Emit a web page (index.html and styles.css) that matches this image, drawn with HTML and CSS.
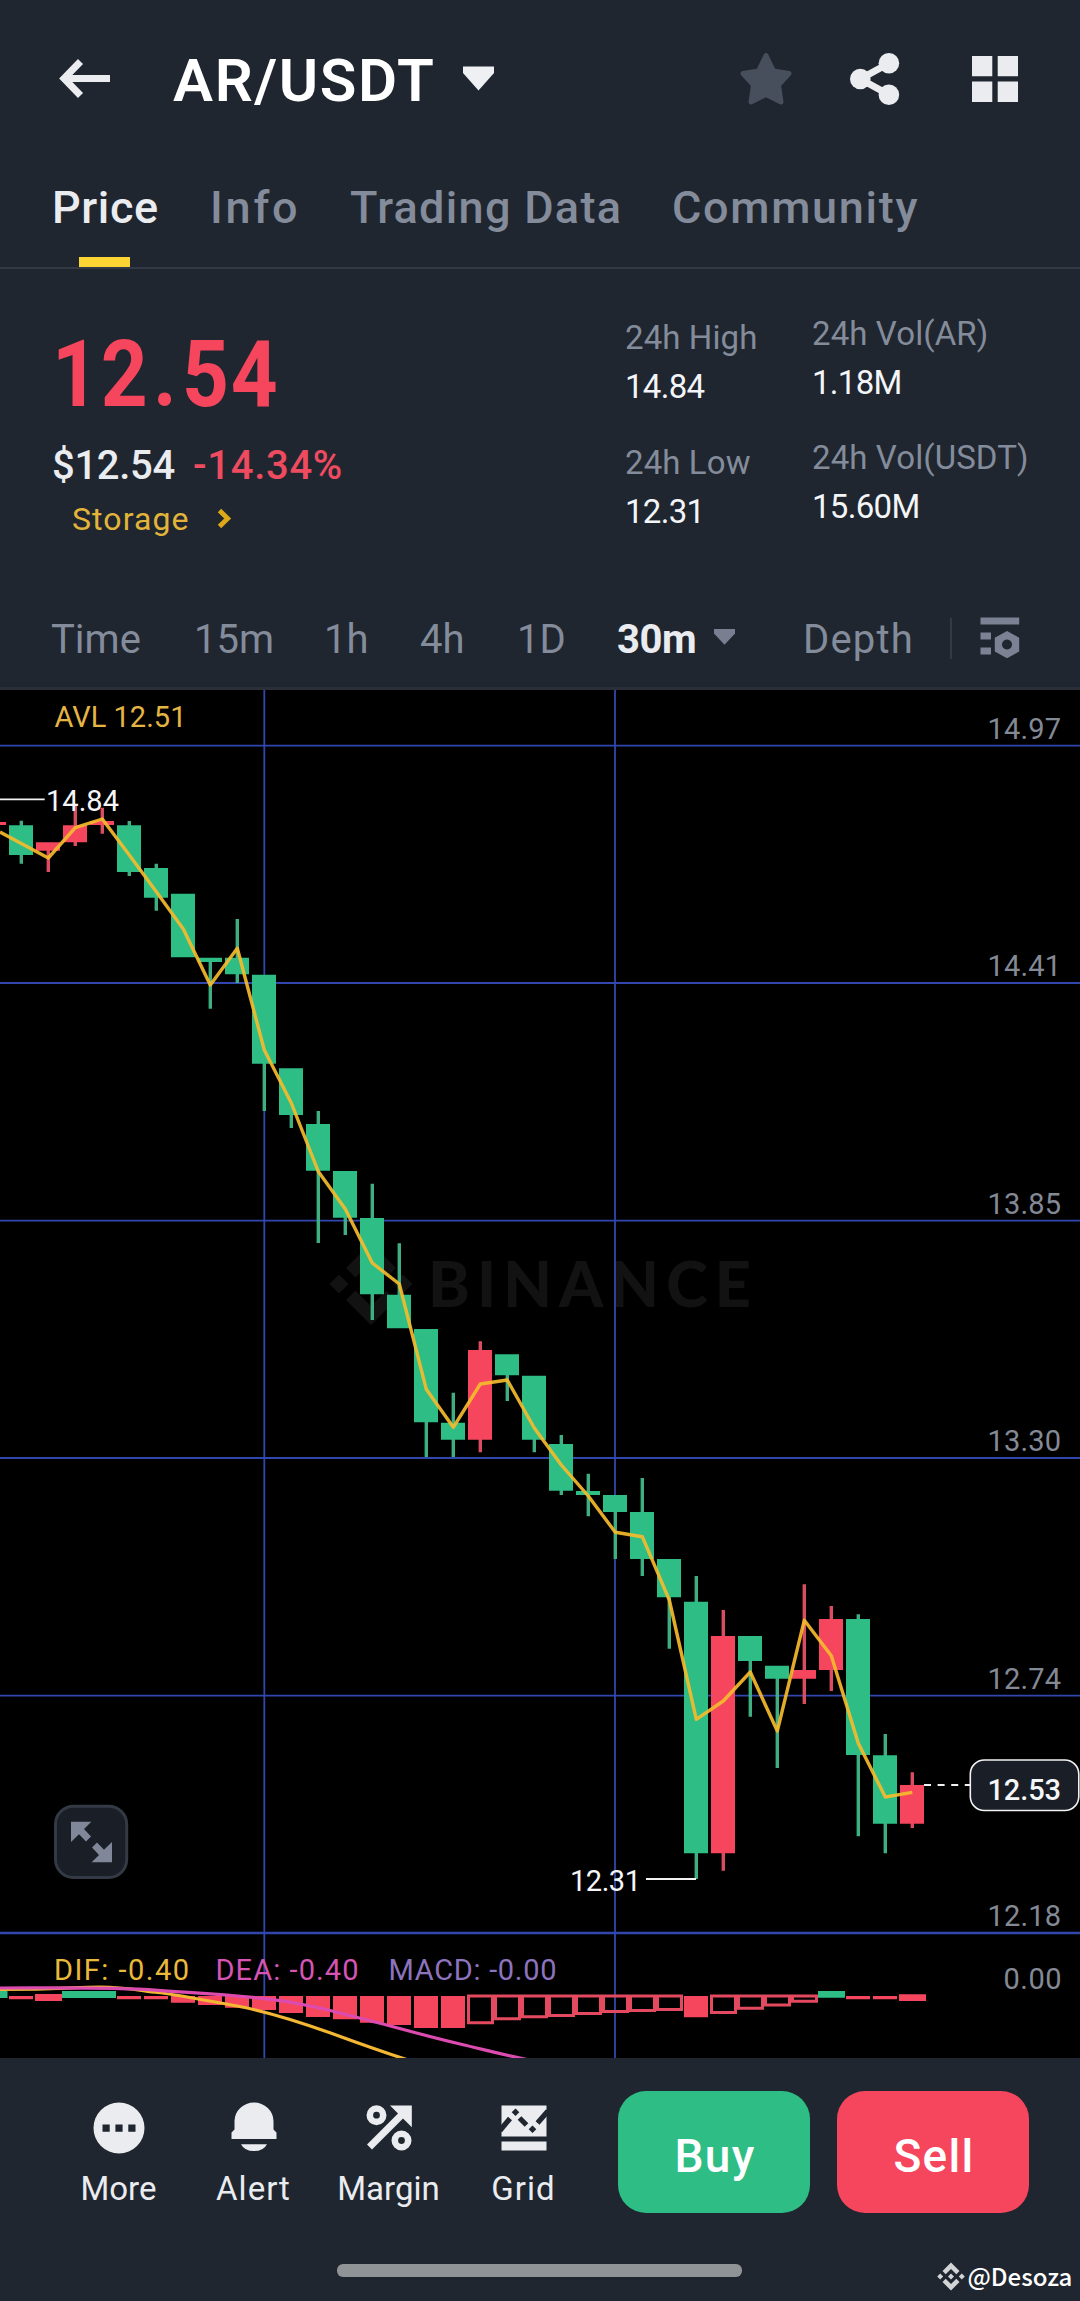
FILE: index.html
```html
<!DOCTYPE html>
<html lang="en">
<head>
<meta charset="utf-8">
<title>AR/USDT</title>
<link rel="stylesheet" href="styles.css">
</head>
<body>
<header class="header">
  <svg class="back" width="52" height="40" viewBox="59 59 52 40"><path d="M110 78.5H64M80.500 61.500L64 78.500L80.500 95.500" fill="none" stroke="#eaecef" stroke-width="7"/></svg>
  <h1 class="pair">AR/USDT</h1>
  <svg class="pair-caret" width="32" height="26" viewBox="463 66 32 26"><path d="M463 66.500H494V73L478.500 90.500L463 73Z" fill="#eef0f4"/></svg>
  <div class="actions">
    <svg width="52" height="54" viewBox="740 52 52 54"><path d="M766 55.500L773.500 71L789 73.500L778.500 85L781 102L766 94.500L751 102L753.500 85L743 73.500L758.500 71Z" fill="#474f5d" stroke="#474f5d" stroke-width="5" stroke-linejoin="round"/></svg>
    <svg width="52" height="54" viewBox="849 52 52 54"><path d="M889 63.300L860.300 79L889 94.700" fill="none" stroke="#eaecef" stroke-width="7"/><g fill="#eaecef"><circle cx="860.300" cy="79" r="10.300"/><circle cx="888.900" cy="63.300" r="10.300"/><circle cx="888.900" cy="94.700" r="10.300"/></g></svg>
    <svg width="48" height="54" viewBox="971 52 48 54"><path d="M972 56h20.300v20.300H972zM997.700 56H1018v20.300h-20.300zM972 81.500h20.300V102H972zM997.700 81.500H1018V102h-20.300z" fill="#eaecef"/></svg>
  </div>
</header>

<nav class="tabs">
  <a class="tab active">Price</a>
  <a class="tab info">Info</a>
  <a class="tab data">Trading Data</a>
  <a class="tab community">Community</a>
</nav>

<section class="summary">
  <div class="quote">
    <div class="last">12<span class="point">.</span>54</div>
    <div class="change"><span class="fiat">$12.54</span><span class="percent">-14.34%</span></div>
    <div class="category">Storage<svg width="15" height="20" viewBox="217 507 15 20"><path d="M219.500 509.500L227.700 517.500L219.500 525.500" fill="none" stroke="#dda918" stroke-width="4.800"/></svg></div>
  </div>
  <dl class="stats range">
    <div><dt>24h High</dt><dd>14.84</dd></div>
    <div><dt>24h Low</dt><dd>12.31</dd></div>
  </dl>
  <dl class="stats volume">
    <div><dt>24h Vol(AR)</dt><dd>1.18M</dd></div>
    <div><dt>24h Vol(USDT)</dt><dd>15.60M</dd></div>
  </dl>
</section>

<nav class="intervals">
  <span class="time">Time</span><span>15m</span><span>1h</span><span>4h</span><span>1D</span>
  <span class="selected">30m<svg width="21" height="16" viewBox="715 628 21 16"><path d="M715 628H736V632.500L725.500 643.800L715 632.500Z" fill="#777f90"/></svg></span>
  <span class="depth">Depth</span>
  <i class="rule"></i>
  <svg class="settings" width="40" height="42" viewBox="979.500 616.500 40 42"><path d="M980 617h38.700v7H980zM980 632h10.500v7H980zM980 647h10.500v7H980z" fill="#7a8294"/><path d="M1006.500 630.500l12.200 6.700v13.800l-12.200 6.700l-12.200-6.700v-13.800zM1006.500 639a5 5 0 1 0 .01 0z" fill="#7a8294" fill-rule="evenodd"/></svg>
</nav>

<svg class="chart" width="1080" height="1368" viewBox="0 690 1080 1368">
  <!-- watermark -->
  <g fill="#121212">
    <path d="M371 1243l25 25l-9.500 9.500l-15.500-15.500l-15.500 15.500l-9.500-9.500zM371 1325l25-25l-9.500-9.500l-15.500 15.500l-15.500-15.500l-9.500 9.500zM339 1274.500l9.500 9.500l-9.500 9.500l-9.500-9.500zM403 1274.500l9.500 9.500l-9.500 9.500l-9.500-9.500zM371 1274.500l9.500 9.500l-9.500 9.500l-9.500-9.500z"/>
    <text class="brand" x="428" y="1307" textLength="323" lengthAdjust="spacing">BINANCE</text>
  </g>
  <path class="grid" d="M0 745.700H1080M0 983H1080M0 1220.700H1080M0 1458H1080M0 1695.700H1080M264.300 690V2058M615 690V2058"/>
  <path class="grid panel" d="M0 1933H1080"/>

  <!-- wicks -->
  <path class="wick up" d="M21 820.700V863.700M129 821V876M156 863.700V910.700M210 960V1008.700M237 919V983M264 1060V1111M291 1110V1128M318 1111V1243M345 1210V1235M372 1183.700V1320M399 1243.300V1300M426 1420V1457M453 1392.700V1457M507 1370V1401M534 1430V1452.300M561 1435V1495M588 1473.700V1516.300M615 1510V1559M642 1478V1576M669 1590V1648.700M696 1576V1879M750 1650V1716.700M777 1670V1768M858 1614.300V1836.300M885 1734V1853.300"/>
  <path class="wick down" d="M48 845V872M75 804V846M102 807.700V833.700M480 1341.300V1452.300M723 1610V1870.700M804 1584.300V1704M831 1606V1691M912 1772.300V1828"/>
  <!-- bodies -->
  <path class="body up" d="M21 825.300V855M129 825.300V872M156 868V897.700M183 893.700V957.300M210 957.700V962M237 957.700V974.300M264 974.700V1063.700M291 1068.300V1115M318 1124V1170.700M345 1171V1217.700M372 1218V1294.300M399 1294.700V1328.300M426 1329V1422.300M453 1422.700V1439.700M507 1354.300V1375.300M534 1375.700V1439.700M561 1444V1490.700M588 1491V1495M615 1495V1512M642 1512V1559M669 1559V1597.300M696 1601.700V1853.300M750 1636V1661M777 1665.700V1678.700M858 1619V1755M885 1755.300V1823.700"/>
  <path class="body down" d="M-6 822V825M48 842.300V850.700M75 825.300V842.300M102 821V825M480 1350V1439.700M723 1636V1853.300M804 1670V1678.700M831 1619V1670M912 1785V1823.700"/>
  <polyline class="avl" points="0,832 21.300,843.500 48.300,858 75.300,827.700 102.300,819 129.300,855 156.300,891.700 183.300,929 210.300,985 237.300,948.300 264.300,1050 291.300,1103 318.300,1171.500 345.300,1209 372.300,1263 399.300,1284 426.300,1389.300 453.300,1427.300 480.300,1384 507.300,1380 534.300,1428 561.300,1465 588.300,1496 615.300,1532.300 642.300,1536.700 669.300,1600 696.300,1719.300 723.300,1701 750.300,1672 777.300,1731 804.300,1620.300 831.300,1655.700 858.300,1743.300 885.300,1797 912.300,1792.300"/>

  <!-- high and low callouts, last price -->
  <path d="M0 799.300H44.700M646 1879H696" stroke="#f2f2f2" stroke-width="1.800"/>
  <path d="M924 1785H970" stroke="#f2f2f2" stroke-width="1.800" stroke-dasharray="7 6.600"/>
  <g class="label" fill="#f5f6f8">
    <text x="46" y="810.500" textLength="73">14.84</text>
    <text x="570" y="1890.700" textLength="71">12.31</text>
  </g>
  <rect x="970.300" y="1760" width="108.500" height="50.500" rx="14" fill="#1a1e27" stroke="#f2f2f2" stroke-width="1.600"/>
  <text class="label tag" x="987.500" y="1799.700" textLength="73.500">12.53</text>
  <g class="label axis">
    <text x="987.500" y="738.700" textLength="73.500">14.97</text>
    <text x="987.500" y="976" textLength="73.500">14.41</text>
    <text x="987.500" y="1213.700" textLength="73.500">13.85</text>
    <text x="987.500" y="1451" textLength="73.500">13.30</text>
    <text x="987.500" y="1689" textLength="73.500">12.74</text>
    <text x="987.500" y="1926" textLength="73.500">12.18</text>
    <text x="1003.500" y="1988.700" textLength="58">0.00</text>
  </g>
  <text class="label" x="54.500" y="726.700" textLength="132" fill="#e5b544">AVL 12.51</text>

  <!-- MACD histogram -->
  <g class="hist up"><path d="M-19.500 1991H7.500V1998H-19.500zM62 1991H116V1998H62zM818 1991H845V1997.700H818z"/></g>
  <g class="hist down"><path d="M35 1994H62V2001H35zM899 1994.300H926V2001H899z"/></g>
  <path class="body down" d="M21 1996V1999.300M129 1996V1999.300M156 1996V1999.300M183 1996V2002.700M210 1996V2005M237 1996V2007.700M264 1996V2010M291 1996V2013M318 1996V2017M345 1996V2019.300M372 1996V2022.700M399 1996V2025M426 1996V2028M453 1996V2028M696 1996V2017.300M858 1996V1999.300M885 1996V1999.300"/>
  <path class="hollow" d="M468.500 1996h24v26.800h-24zM495.500 1996h24v22.800h-24zM522.500 1996h24v20.700h-24zM549.500 1996h24v19.500h-24zM576.500 1996h24v17.500h-24zM603.500 1996h24v15.500h-24zM630.500 1996h24v14.500h-24zM657.500 1996h24v13.500h-24zM711.500 1996h24v16.500h-24zM738.500 1996h24v12.200h-24zM765.500 1996h24v9h-24zM792.500 1996h24v5.200h-24z"/>
  <path d="M0 1989.300C60 1989.300 75 1987 100 1987S140 1990.500 158 1992.500S215 2002 245 2007.500C275 2014 300 2022 330.600 2033C355 2042 380 2051 408 2060" fill="none" stroke="#f3b733" stroke-width="3.200"/>
  <path d="M0 1988C60 1988 110 1987 158 1990.300S220 1994 262 1998.300S340 2013 375 2022S430 2037 458 2043.500S495 2053 527 2059.500" fill="none" stroke="#dc4bb0" stroke-width="3.200"/>
  <text class="label" x="54" y="1979.700" textLength="135" fill="#e9b93c">DIF: -0.40</text>
  <text class="label" x="215.500" y="1979.700" textLength="143" fill="#d654b3">DEA: -0.40</text>
  <text class="label" x="388.500" y="1979.700" textLength="168" fill="#8d73be">MACD: -0.00</text>

  <!-- full screen button -->
  <rect x="55.500" y="1806.200" width="71.200" height="71.300" rx="18" fill="#1a1e27" stroke="#343a45" stroke-width="3"/>
  <path d="M71 1821.700H91.300L84 1829L91 1836.500L86 1841.500L79 1834.200L71 1842ZM112 1862.300H91.700L99 1855L92 1847.500L97 1842.500L104 1849.800L112 1842Z" fill="#808798"/>
</svg>

<footer class="footer">
  <div class="bar">
    <nav class="tools">
      <a><svg width="56" height="56" viewBox="-28 -28 56 56"><circle r="25.500" fill="#eaecef"/><path d="M-16.500-3.500h7.200v7.200h-7.200zM-3.600-3.500h7.200v7.200h-7.200zM9.300-3.500h7.200v7.200h-7.200z" fill="#1f262f"/></svg>More</a>
      <a class="wide"><svg width="56" height="56" viewBox="-28 -28 56 56"><path d="M-22.500 11V4.500L-19.500 1.500V-7A19.500 18.500 0 0 1 19.500-7V1.500L22.500 4.500V11ZM-13 16.200H13A14 11 0 0 1-13 16.200Z" fill="#eaecef"/></svg>Alert</a>
      <a><svg width="56" height="56" viewBox="-28 -28 56 56"><g fill="none" stroke="#eaecef"><path d="M-19.500 19L13-13.500" stroke-width="7"/><circle cx="-12.500" cy="-12.800" r="6.700" stroke-width="6.600"/><circle cx="12.500" cy="12.500" r="6.700" stroke-width="6.600"/></g><path d="M1-22.500H22.800V-.7Z" fill="#eaecef"/></svg>Margin</a>
      <a class="wide"><svg width="56" height="56" viewBox="-28 -28 56 56"><path d="M-22.500-22.500h45V8.500h-45zM-22.500 13.500h45v9h-45z" fill="#eaecef"/><path d="M-24 2.500L-14-9.500M-4.500-10L2.500-3M13.500-5L24-17" stroke="#1f262f" stroke-width="5.200"/><path d="M-8.500-19.500l3.800 3.800l-3.800 3.800l-3.800-3.800zM8.500-2.500l3.800 3.800l-3.800 3.800l-3.800-3.800z" fill="#1f262f"/></svg>Grid</a>
    </nav>
    <button class="trade buy">Buy</button>
    <button class="trade sell">Sell</button>
  </div>
  <div class="home"></div>
  <div class="author"><svg width="28" height="29" viewBox="-14 -14.500 28 29"><path d="M0-14l8.500 8.500l-3.200 3.200L0-7.600l-5.300 5.300l-3.200-3.200zM0 14l8.500-8.500l-3.200-3.200L0 7.600l-5.300-5.300l-3.200 3.200zM-10.800-3l3 3l-3 3l-3-3zM10.800-3l3 3l-3 3l-3-3zM0-3l3 3l-3 3l-3-3z" fill="#d3d4d6"/></svg>@Desoza</div>
</footer>
</body>
</html>
```
FILE: styles.css
```css
* { box-sizing: border-box; }
body {
  margin: 0;
  width: 1080px;
  height: 2301px;
  overflow: hidden;
  background: #1f262f;
  color: #eaecef;
  font-family: Roboto, "Liberation Sans", sans-serif;
}
svg { display: block; flex: none; }

.header { display: flex; align-items: center; height: 158px; padding: 0 61px 0 59px; }
.pair { margin: 4px 0 0 62px; width: 290px; font-size: 60px; line-height: 70px; font-weight: 600; letter-spacing: 1.6px; color: #fff; }
.actions { display: flex; align-items: center; margin-left: auto; }
.actions svg + svg { margin-left: 57px; }
.actions svg:last-child { margin-left: 70px; }

.tabs { display: grid; grid-template-columns: 158px 140px 322px 300px; height: 111px; padding-left: 52px; border-bottom: 2px solid #333a45; }
.tab { font-size: 45px; line-height: 99px; font-weight: 500; color: #848c9b; white-space: nowrap; }
.tab.info { letter-spacing: 2.8px; }
.tab.data { letter-spacing: 1.3px; }
.tab.community { letter-spacing: 1.7px; }
.tab.active { color: #eaecef; letter-spacing: .6px; }
.tab.active::after { content: ""; display: block; width: 51px; height: 10px; margin-left: 27px; background: #fcd535; }

.summary { display: grid; grid-template-columns: 625px 187px 1fr; height: 320px; }
.quote { padding: 56px 0 0 52px; }
.last { width: 270px; font-size: 93px; line-height: 100px; font-weight: 700; letter-spacing: 2px; color: #f6465d; transform: scaleX(.88); transform-origin: left; }
.point { margin: 0 4px; }
.change { display: flex; gap: 18px; margin-top: 16px; font-size: 40px; line-height: 50px; font-weight: 500; }
.fiat { letter-spacing: -.3px; }
.percent { color: #ee4a60; letter-spacing: .7px; }
.category { display: flex; align-items: center; gap: 27px; margin-top: 8px; padding-left: 20px; font-size: 32px; line-height: 40px; letter-spacing: 1.1px; color: #e2b53a; }
.category svg { margin-top: -3px; }

.stats { display: flex; flex-direction: column; gap: 27px; margin: 0; padding-top: 44px; font-size: 33px; line-height: 49px; white-space: nowrap; }
.stats.volume { padding-top: 40px; gap: 26px; }
.stats dt { color: #848c9b; letter-spacing: .1px; }
.stats dd { margin: 0; letter-spacing: -.7px; color: #f3f5f8; }

.intervals { display: grid; grid-template-columns: 143px 130px 96px 97px 100px 186px 145px 29px 40px; align-items: center; height: 101px; padding-left: 51px; border-bottom: 3px solid #2b3038; font-size: 40px; line-height: 98px; color: #848c9b; }
.intervals span { padding-top: 3px; line-height: 95px; }
.intervals .selected { display: flex; align-items: center; gap: 18px; color: #eaecef; font-weight: 700; letter-spacing: -.5px; }
.selected svg { margin-top: -6px; }
.depth { letter-spacing: 1.2px; }
.rule { width: 2px; height: 41px; margin-left: 2px; background: #333a45; }
.settings { margin-left: 3px; }

.chart { background: #000; }
.brand { font: 900 63px Lato, sans-serif; }
.grid { fill: none; stroke: #3147ad; stroke-width: 1.8; }
.grid.panel { stroke-width: 2.3; }
.wick { fill: none; stroke-width: 3.4; transform: translateX(.3px); }
.wick.up { stroke: #3fae80; }
.wick.down { stroke: #da4c60; }
.body { fill: none; stroke-width: 24; }
.body.up { stroke: #2ebd85; }
.body.down { stroke: #f6465d; }
.hist.up { fill: #2ebd85; }
.hist.down { fill: #f6465d; }
.hollow { fill: none; stroke: #e34a5f; stroke-width: 3; }
.avl { fill: none; stroke: #f5bb2c; stroke-width: 3.4; stroke-opacity: .92; stroke-linejoin: round; }
.label { font-size: 29px; }
.axis { fill: #848a95; }
.tag { fill: #f5f6f8; font-weight: 500; }

.footer { position: relative; height: 243px; padding-top: 33px; }
.bar { display: flex; height: 122px; padding-left: 51px; }
.tools { display: grid; grid-template-columns: repeat(4, 135px); width: 567px; padding-top: 9px; }
.tools a { display: flex; flex-direction: column; align-items: center; gap: 13px; font-size: 33px; line-height: 40px; }
.tools .wide { letter-spacing: 1px; }
.trade { width: 192px; height: 122px; padding: 8px 0 0 2px; border: 0; border-radius: 28px; color: #fff; font: 500 46px Roboto, sans-serif; letter-spacing: 1.3px; }
.buy { margin-right: 27px; background: #2ebd85; }
.sell { background: #f6465d; }
.home { width: 405px; height: 13px; margin: 51px auto 0 337px; border-radius: 6px; background: #919497; }
.author { position: absolute; left: 936.500px; bottom: 6px; display: flex; align-items: center; gap: 3px; font: 500 24px/38px "Noto Sans CJK SC", "Noto Sans", sans-serif; color: #fff; }
```
